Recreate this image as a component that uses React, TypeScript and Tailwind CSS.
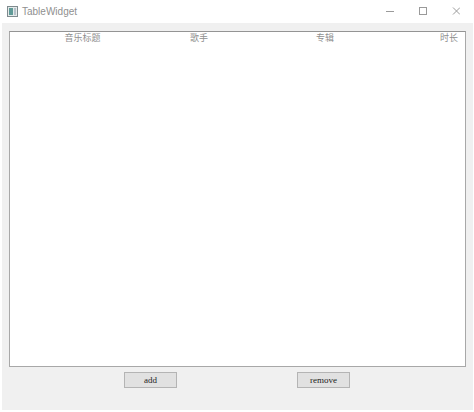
import React from "react";

const columns = [
  { name: "音乐标题", className: "text-center" },
  { name: "歌手", className: "text-center" },
  { name: "专辑", className: "text-center" },
  { name: "时长", className: "text-right pr-[7px]" },
];

const App = () => {
  return (
    <div className="flex flex-col w-[474px] h-[412px] bg-white overflow-hidden font-['Liberation_Sans','Noto_Sans_CJK_SC',sans-serif]">
      {/* Title bar */}
      <div className="flex items-center h-[23px] shrink-0 pl-[7px]">
        <svg width="11" height="11" viewBox="0 0 11 11" className="shrink-0">
          <rect x="0.5" y="0.5" width="10" height="10" fill="#e4eaea" stroke="#7f8a8e" />
          <rect x="2" y="2" width="4" height="7" fill="#5f9a97" />
          <rect x="7" y="2" width="2" height="7" fill="#b4c0c8" />
        </svg>
        <span className="ml-[4px] text-[10px] text-[#8f8f8f]">TableWidget</span>
        <svg width="74" height="9" viewBox="0 0 74 9" className="ml-auto mr-[14px] shrink-0 text-[#9a9a9a]" fill="none" stroke="currentColor">
          <path d="M0 4.5H8" />
          <rect x="33.5" y="0.5" width="7" height="7" />
          <path d="M67 0.5L74 7.5M74 0.5L67 7.5" />
        </svg>
      </div>

      {/* Client area */}
      <div className="flex flex-col flex-1 min-h-0 ml-[2px] mr-[1px] mb-[2px] bg-[#f0f0f0] pl-[7px] pr-[7px] pt-[8px]">
        <div className="h-[336px] shrink-0 bg-white border border-[#a8a8a8] border-t-[#949494]">
          <div className="grid grid-cols-[145px_88px_164px_1fr] h-[13px] text-[9px] leading-[13px] text-[#8f8f8f]">
            {columns.map((col, i) => (
              <div key={i} className={col.className}>
                {col.name}
              </div>
            ))}
          </div>
        </div>
        <div className="flex mt-[5px] pl-[115px]">
          <button className="w-[53px] h-[16px] bg-[#e1e1e1] border border-[#b4b4b4] font-['Liberation_Serif',serif] text-[9px] leading-[14px] text-[#222]">
            add
          </button>
          <button className="ml-[120px] w-[53px] h-[16px] bg-[#e1e1e1] border border-[#b4b4b4] font-['Liberation_Serif',serif] text-[9px] leading-[14px] text-[#222]">
            remove
          </button>
        </div>
      </div>
    </div>
  );
};

export default App;
